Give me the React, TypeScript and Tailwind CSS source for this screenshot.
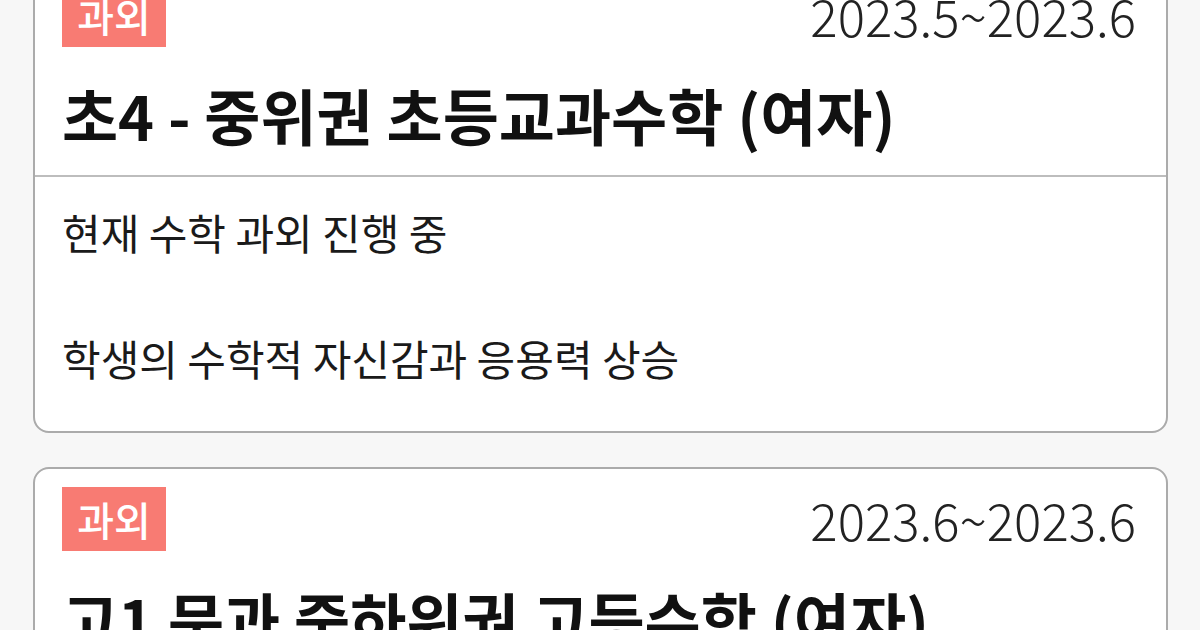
import React from 'react';

interface Lesson {
  tag: string;
  period: string;
  title: string;
  lines: string[];
}

const lessons: Lesson[] = [
  {
    tag: '과외',
    period: '2023.5~2023.6',
    title: '초4 - 중위권 초등교과수학 (여자)',
    lines: ['현재 수학 과외 진행 중', '', '학생의 수학적 자신감과 응용력 상승'],
  },
  {
    tag: '과외',
    period: '2023.6~2023.6',
    title: '고1 문과 중하위권 고등수학 (여자)',
    lines: ['현재 수학 과외 진행 중', '', '학생의 수학적 자신감과 응용력 상승'],
  },
];

function LessonCard({ lesson }: { lesson: Lesson }) {
  return (
    <div className="bg-white border-2 border-[#ababab] rounded-[16px] overflow-hidden">
      <div className="px-[27px] pt-[18px] pb-[28px] border-b-2 border-[#bdbdbd]">
        <div className="flex items-center justify-between">
          <span className="flex items-center justify-center w-[104px] h-[64px] bg-[#f87b73] text-white text-[40px] font-medium leading-none">
            {lesson.tag}
          </span>
          <span className="text-[51px] font-light text-[#222] leading-none pr-[3px]">{lesson.period}</span>
        </div>
        <h2 className="mt-[36px] text-[61px] font-bold text-[#111] leading-[64px] whitespace-nowrap">
          {lesson.title}
        </h2>
      </div>
      <div className="px-[27px] pt-[23px] pb-[42px]">
        {lesson.lines.map((line, i) => (
          <p key={i} className="text-[42px] text-[#1a1a1a] leading-[63px] h-[63px]">
            {line}
          </p>
        ))}
      </div>
    </div>
  );
}

export default function App() {
  return (
    <div
      className="w-[1200px] h-[630px] overflow-hidden bg-[#f7f7f7]"
      style={{ fontFamily: '"Noto Sans CJK KR", "Noto Sans", sans-serif' }}
    >
      <div className="flex flex-col gap-[34px] pl-[33px] pr-[32px] -mt-[37px]">
        {lessons.map((l, i) => (
          <LessonCard key={i} lesson={l} />
        ))}
      </div>
    </div>
  );
}
